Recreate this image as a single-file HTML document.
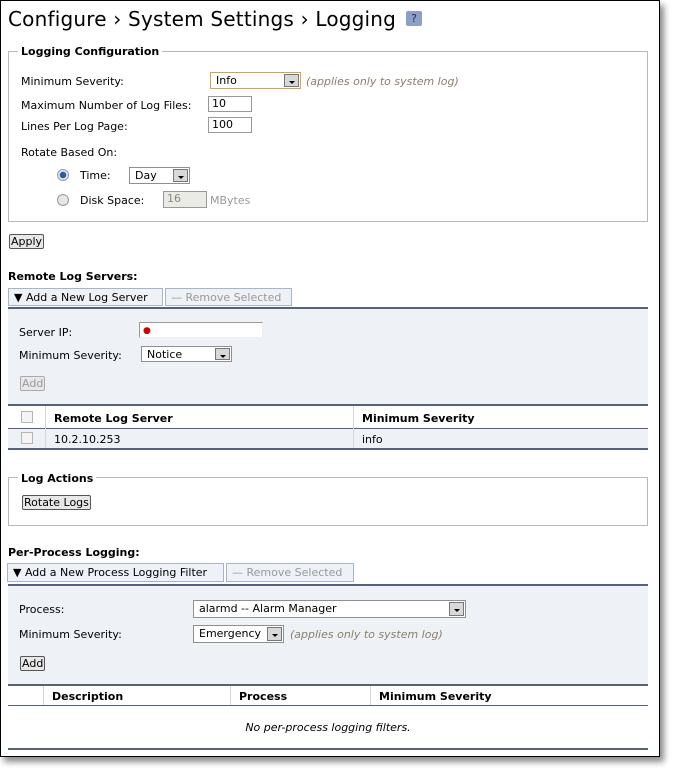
<!DOCTYPE html>
<html><head><style>
*{margin:0;padding:0;box-sizing:border-box}
body{width:675px;height:773px;background:#fff;position:relative;font-family:"DejaVu Sans",Verdana,sans-serif;font-size:11px;color:#000;overflow:hidden}
.a{position:absolute;white-space:nowrap}
.frame{position:absolute;left:0;top:0;width:660px;height:757px;border:1px solid #000;background:#fff;box-shadow:4px 5px 6px rgba(0,0,0,.45)}
.fs{position:absolute;border:1px solid #b8b8b8}
.lg{position:absolute;background:#fff;font-weight:bold;padding:0 3px}
.b{font-weight:bold}
.sel{position:absolute;border:1px solid #8f8f8f;background:#fff;padding-left:5px;line-height:15px}
.sel .ar{position:absolute;right:1px;top:1px;bottom:1px;width:15px;background:#d8d8d8;border:1px solid #777}
.sel .ar:after{content:"";position:absolute;left:4px;top:6px;border-left:3px solid transparent;border-right:3px solid transparent;border-top:3px solid #000}
.inp{position:absolute;border:1px solid #999;background:#fff;padding-left:3px;line-height:14px}
.btn{position:absolute;border:1px solid #555;border-radius:2px;background:#e8e8e8;line-height:13px;padding:0 1px}
.tb{position:absolute;border:1px solid #a7b5cc;background:#eef1f6;line-height:17px;padding-left:5px}
.it{font-style:italic;color:#8a7f6a}
.panel{position:absolute;left:8px;width:640px;background:#eef1f6;border-top:2px solid #56627c}
.radio{position:absolute;width:12px;height:12px;border-radius:50%;border:1px solid #999;background:#e6e6e6}
.cb{position:absolute;width:12px;height:12px;border:1px solid #b5b5b5;background:#f4f4f4}
</style></head><body>
<div class="frame"></div>
<div class="a" style="left:8px;top:5px;font-size:20px;letter-spacing:0.2px;line-height:28px">Configure › System Settings › Logging</div>
<div class="a" style="left:406px;top:11px;width:16px;height:15px;background:#8d9fc6;border-radius:2px;color:#25324f;font-size:11px;text-align:center;line-height:15px">?</div>

<div class="fs" style="left:8px;top:51px;width:640px;height:171px"></div>
<div class="lg" style="left:18px;top:45px">Logging Configuration</div>
<div class="a" style="left:21px;top:75px">Minimum Severity:</div>
<div class="sel" style="left:210px;top:72px;width:91px;height:17px;border:1px solid #d7a24a">Info<span class="ar"></span></div>
<div class="a it" style="left:306px;top:75px">(applies only to system log)</div>
<div class="a" style="left:21px;top:99px">Maximum Number of Log Files:</div>
<div class="inp" style="left:208px;top:96px;width:44px;height:16px">10</div>
<div class="a" style="left:21px;top:120px">Lines Per Log Page:</div>
<div class="inp" style="left:208px;top:117px;width:44px;height:16px">100</div>
<div class="a" style="left:21px;top:146px">Rotate Based On:</div>
<div class="radio" style="left:57px;top:169px;background:radial-gradient(circle,#2a5da0 0 3px,#dfe7f0 3.5px)"></div>
<div class="a" style="left:80px;top:169px">Time:</div>
<div class="sel" style="left:129px;top:167px;width:61px;height:17px">Day<span class="ar"></span></div>
<div class="radio" style="left:57px;top:194px"></div>
<div class="a" style="left:80px;top:194px">Disk Space:</div>
<div class="inp" style="left:163px;top:191px;width:44px;height:17px;background:#ebebe6;color:#888">16</div>
<div class="a" style="left:210px;top:194px;color:#999">MBytes</div>
<div class="btn" style="left:9px;top:234px">Apply</div>

<div class="a b" style="left:8px;top:270px">Remote Log Servers:</div>
<div class="tb" style="left:8px;top:288px;width:155px;height:18px">▼ Add a New Log Server</div>
<div class="tb" style="left:165px;top:288px;width:127px;height:18px;color:#999">— Remove Selected</div>
<div class="panel" style="top:307px;height:98px"></div>
<div class="a" style="left:19px;top:326px">Server IP:</div>
<div class="inp" style="left:139px;top:322px;width:124px;height:16px;border-color:#999 #eee #eee #999"><span style="color:#c00;font-size:9px">●</span></div>
<div class="a" style="left:19px;top:349px">Minimum Severity:</div>
<div class="sel" style="left:141px;top:346px;width:91px;height:16px">Notice<span class="ar"></span></div>
<div class="btn" style="left:20px;top:376px;color:#999;border-color:#aaa">Add</div>
<div style="position:absolute;left:8px;top:404px;width:640px;height:46px;border-top:2px solid #56627c;border-bottom:2px solid #56627c;background:#fff"></div>
<div style="position:absolute;left:8px;top:428px;width:640px;height:20px;background:#eef1f6;border-top:1px solid #56627c"></div>
<div style="position:absolute;left:45px;top:406px;width:1px;height:42px;background:#d6d6d6"></div>
<div style="position:absolute;left:353px;top:406px;width:1px;height:42px;background:#d6d6d6"></div>
<div class="cb" style="left:21px;top:411px"></div>
<div class="cb" style="left:21px;top:432px"></div>
<div class="a b" style="left:54px;top:412px">Remote Log Server</div>
<div class="a b" style="left:362px;top:412px">Minimum Severity</div>
<div class="a" style="left:54px;top:433px">10.2.10.253</div>
<div class="a" style="left:362px;top:433px">info</div>

<div class="fs" style="left:8px;top:477px;width:640px;height:49px"></div>
<div class="lg" style="left:18px;top:472px">Log Actions</div>
<div class="btn" style="left:22px;top:495px">Rotate Logs</div>

<div class="a b" style="left:8px;top:546px">Per-Process Logging:</div>
<div class="tb" style="left:7px;top:563px;width:217px;height:19px">▼ Add a New Process Logging Filter</div>
<div class="tb" style="left:226px;top:563px;width:128px;height:19px;color:#999">— Remove Selected</div>
<div class="panel" style="top:584px;height:102px"></div>
<div class="a" style="left:19px;top:603px">Process:</div>
<div class="sel" style="left:193px;top:600px;width:273px;height:18px">alarmd -- Alarm Manager<span class="ar"></span></div>
<div class="a" style="left:19px;top:628px">Minimum Severity:</div>
<div class="sel" style="left:193px;top:625px;width:91px;height:18px">Emergency<span class="ar"></span></div>
<div class="a it" style="left:290px;top:628px">(applies only to system log)</div>
<div class="btn" style="left:20px;top:656px">Add</div>
<div style="position:absolute;left:8px;top:684px;width:640px;height:66px;border-top:2px solid #56627c;border-bottom:2px solid #56627c;background:#fff"></div>
<div style="position:absolute;left:8px;top:705px;width:640px;height:1px;background:#56627c"></div>
<div style="position:absolute;left:43px;top:686px;width:1px;height:19px;background:#d6d6d6"></div>
<div style="position:absolute;left:230px;top:686px;width:1px;height:19px;background:#d6d6d6"></div>
<div style="position:absolute;left:370px;top:686px;width:1px;height:19px;background:#d6d6d6"></div>
<div class="a b" style="left:52px;top:690px">Description</div>
<div class="a b" style="left:239px;top:690px">Process</div>
<div class="a b" style="left:379px;top:690px">Minimum Severity</div>
<div class="a" style="left:8px;width:640px;text-align:center;top:721px;font-style:italic">No per-process logging filters.</div>
</body></html>
